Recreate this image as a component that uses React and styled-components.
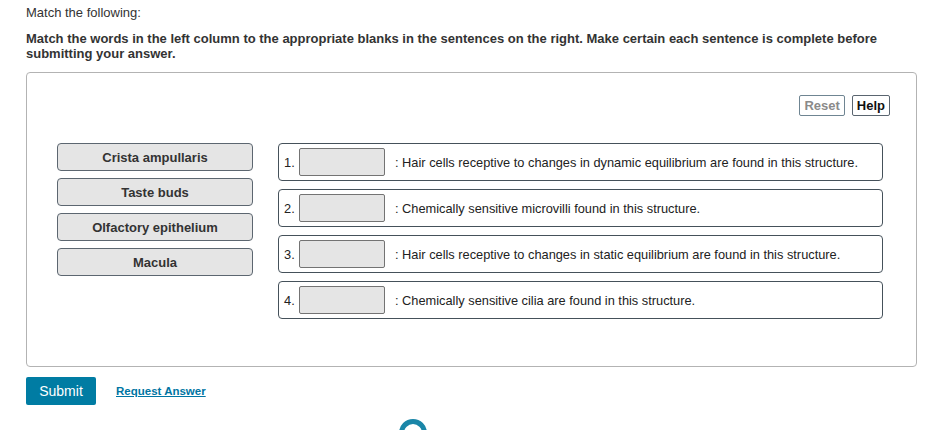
import React from "react";
import styled, { createGlobalStyle } from "styled-components";

let Global = createGlobalStyle`
  html, body {
    margin: 0;
    padding: 0;
    background: #fff;
    font-family: "Liberation Sans", Arial, sans-serif;
    color: #333;
  }
`;

let Page = styled.div`
  width: 927px;
  height: 430px;
  overflow: hidden;
  box-sizing: border-box;
  padding: 5px 10px 0 26px;
  position: relative;
`;

let Title = styled.p`
  margin: 0;
  font-size: 13px;
  line-height: 16px;
`;

let Instructions = styled.p`
  margin: 10px 0 0;
  font-size: 13px;
  line-height: 15px;
  font-weight: 700;
  width: 870px;
`;

let Panel = styled.div`
  margin-top: 11px;
  width: 891px;
  height: 295px;
  box-sizing: border-box;
  border: 1px solid #b3b3b3;
  border-radius: 4px;
  padding: 22px 26px 0 30px;
`;

let Tools = styled.div`
  display: flex;
  justify-content: flex-end;
  gap: 7px;
`;

let ToolButton = styled.button`
  font-family: inherit;
  font-size: 13px;
  font-weight: 700;
  height: 21px;
  padding: 0 4px;
  border: 1px solid ${p => (p.disabled ? "#6f8592" : "#5a6570")};
  border-radius: 2px;
  background: #fff;
  color: ${p => (p.disabled ? "#8a8a8a" : "#111")};
`;

let Board = styled.div`
  display: flex;
  gap: 25px;
  margin-top: 27px;
`;

let Terms = styled.div`
  display: flex;
  flex-direction: column;
  gap: 7px;
  width: 196px;
`;

let Term = styled.div`
  height: 28px;
  box-sizing: border-box;
  border: 1px solid #5c6670;
  border-radius: 4px;
  background: #e5e5e5;
  font-size: 13px;
  font-weight: 700;
  color: #333;
  display: flex;
  align-items: center;
  justify-content: center;
`;

let Sentences = styled.div`
  display: flex;
  flex-direction: column;
  gap: 8px;
  width: 605px;
`;

let Sentence = styled.div`
  height: 38px;
  box-sizing: border-box;
  border: 1px solid #45515a;
  border-radius: 4px;
  display: flex;
  align-items: center;
  padding-left: 5px;
  font-size: 12.8px;
  color: #222;
`;

let Num = styled.span`
  width: 15px;
`;

let Blank = styled.div`
  width: 86px;
  height: 28px;
  box-sizing: border-box;
  border: 1px solid #737373;
  border-radius: 2px;
  background: #e5e5e5;
  margin-right: 10px;
`;

let Footer = styled.div`
  display: flex;
  align-items: center;
  gap: 20px;
  margin-top: 10px;
`;

let Submit = styled.button`
  width: 70px;
  height: 28px;
  border: none;
  border-radius: 2px;
  background: #007ca3;
  color: #fff;
  font-family: inherit;
  font-size: 14px;
`;

let RequestLink = styled.a`
  color: #0075a3;
  font-size: 11.5px;
  font-weight: 700;
  text-decoration: underline;
`;

let Badge = styled.div`
  position: absolute;
  left: 399px;
  top: 419px;
  width: 28px;
  height: 28px;
  box-sizing: border-box;
  border-radius: 50%;
  border: 5px solid #1a86a8;
`;

let terms = ["Crista ampullaris", "Taste buds", "Olfactory epithelium", "Macula"];

let sentences = [
  ": Hair cells receptive to changes in dynamic equilibrium are found in this structure.",
  ": Chemically sensitive microvilli found in this structure.",
  ": Hair cells receptive to changes in static equilibrium are found in this structure.",
  ": Chemically sensitive cilia are found in this structure.",
];

export default function App() {
  return (
    <Page>
      <Global />
      <Title>Match the following:</Title>
      <Instructions>
        Match the words in the left column to the appropriate blanks in the sentences on the right. Make
        certain each sentence is complete before submitting your answer.
      </Instructions>
      <Panel>
        <Tools>
          <ToolButton disabled>Reset</ToolButton>
          <ToolButton>Help</ToolButton>
        </Tools>
        <Board>
          <Terms>
            {terms.map(t => (
              <Term key={t}>{t}</Term>
            ))}
          </Terms>
          <Sentences>
            {sentences.map((s, i) => (
              <Sentence key={i}>
                <Num>{i + 1}.</Num>
                <Blank />
                {s}
              </Sentence>
            ))}
          </Sentences>
        </Board>
      </Panel>
      <Footer>
        <Submit>Submit</Submit>
        <RequestLink href="#">Request Answer</RequestLink>
      </Footer>
      <Badge />
    </Page>
  );
}
